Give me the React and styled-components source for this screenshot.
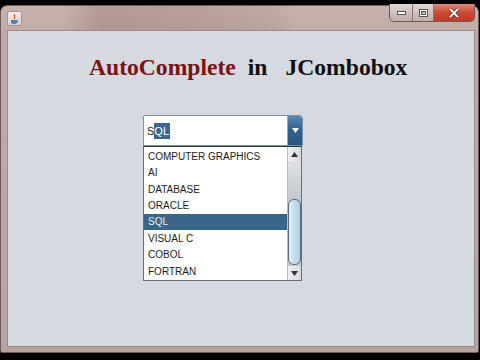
import React from 'react';
import styled, { createGlobalStyle } from 'styled-components';

const GlobalStyle = createGlobalStyle`
  html, body {
    margin: 0;
    padding: 0;
    background: #000;
  }
  #root {
    width: 480px;
    height: 360px;
    overflow: hidden;
  }
`;

const Screen = styled.div`
  width: 480px;
  height: 360px;
  background: #000;
  padding-top: 5px;
  box-sizing: border-box;
`;

const Frame = styled.div`
  width: 479px;
  height: 348px;
  box-sizing: border-box;
  border-radius: 7px 7px 2px 2px;
  border: 1px solid #6d5a58;
  background: linear-gradient(180deg, #c9b3ae 0%, #c2a9a5 8%, #b9a3a0 100%);
  padding: 0 3px 5px 6px;
  display: flex;
  flex-direction: column;
`;

const TitleBar = styled.div`
  height: 24px;
  display: flex;
  align-items: flex-start;
  background: linear-gradient(90deg, transparent 12%, rgba(140, 110, 105, 0.35) 20%, rgba(150, 120, 118, 0.3) 40%, rgba(150, 125, 120, 0.2) 55%, transparent 62%);
`;

const AppIcon = styled.div`
  width: 13px;
  height: 13px;
  margin: 5px 0 0 0;
  border: 1px solid #a49896;
  border-radius: 2px;
  background: linear-gradient(180deg, #f4eeee, #d7cfce);
  display: flex;
  align-items: center;
  justify-content: center;
`;

const Controls = styled.div`
  margin-left: auto;
  margin-top: -2px;
  display: flex;
  border: 1px solid #6c5a5a;
  border-top: none;
  border-radius: 0 0 5px 5px;
  overflow: hidden;
  height: 17px;
`;

const CtrlButton = styled.div`
  width: ${(p) => p.w}px;
  height: 100%;
  display: flex;
  align-items: center;
  justify-content: center;
  background: ${(p) =>
    p.close
      ? 'linear-gradient(180deg, #e08a78 0%, #cc4a32 50%, #c0392a 100%)'
      : 'linear-gradient(180deg, #e2d8d6 0%, #cfc1be 50%, #bfaeab 100%)'};
  border-left: ${(p) => (p.first ? 'none' : '1px solid #8a7473')};
`;

const Content = styled.div`
  flex: 1;
  background: #d6d9df;
  border: 1px solid #9c8c8a;
  display: flex;
  flex-direction: column;
`;

const Heading = styled.h1`
  margin: 22px 0 0 81px;
  font-family: 'Liberation Serif', 'Times New Roman', serif;
  font-weight: bold;
  font-size: 23.6px;
  line-height: 28px;
  color: #111;
  display: flex;
  white-space: pre;
`;

const Word = styled.span`
  color: ${(p) => p.color || '#111'};
  margin-left: ${(p) => p.gap || 0}px;
`;

const Combo = styled.div`
  margin: 34px 0 0 135px;
  width: 160px;
  display: flex;
  flex-direction: column;
`;

const Field = styled.div`
  height: 31px;
  box-sizing: border-box;
  border: 1px solid #7890a8;
  border-radius: 2px 4px 0 0;
  background: #fff;
  display: flex;
  align-items: stretch;
`;

const FieldText = styled.div`
  flex: 1;
  display: flex;
  align-items: center;
  padding-left: 3px;
  font-family: 'Liberation Sans', Arial, sans-serif;
  font-size: 11px;
  color: #222;
`;

const Selected = styled.span`
  background: #3b6891;
  color: #fff;
  padding: 2px 1px 2px 0;
`;

const ArrowButton = styled.div`
  width: 14px;
  background: linear-gradient(180deg, #5b88b4 0%, #33628e 45%, #2a5680 100%);
  display: flex;
  align-items: center;
  justify-content: center;
  border-left: 1px solid #9ab;
  border-radius: 0 3px 0 0;
`;

const Popup = styled.div`
  width: 159px;
  height: 135px;
  box-sizing: border-box;
  border: 1px solid #6f6f72;
  border-top: 1px solid #333;
  background: #fff;
  display: flex;
`;

const List = styled.div`
  flex: 1;
  display: flex;
  flex-direction: column;
  padding-top: 1px;
`;

const Item = styled.div`
  flex-shrink: 0;
  height: 16.45px;
  display: flex;
  align-items: center;
  padding-left: 4px;
  font-family: 'Liberation Sans', Arial, sans-serif;
  font-size: 10px;
  color: ${(p) => (p.active ? '#e8eef5' : '#1c1c1c')};
  background: ${(p) => (p.active ? '#3a6689' : 'transparent')};
`;

const ScrollBar = styled.div`
  width: 13px;
  display: flex;
  flex-direction: column;
  border-left: 1px solid #b8bcc2;
  background: linear-gradient(90deg, #d9dbde 0%, #c4c7cb 60%, #b9bcc1 100%);
`;

const ScrollArrow = styled.div`
  height: 14px;
  display: flex;
  align-items: center;
  justify-content: center;
  background: linear-gradient(90deg, #eef0f2, #d6d9dd);
`;

const Track = styled.div`
  flex: 1;
  display: flex;
  flex-direction: column;
  justify-content: flex-end;
  background: linear-gradient(180deg, #dfe1e4 0%, #c9ccd0 30%, #b6b9be 55%, #c5c8cc 100%);
`;

const Thumb = styled.div`
  height: 66px;
  margin-bottom: 1px;
  box-sizing: border-box;
  border: 1px solid #556a82;
  border-radius: 6px;
  background: linear-gradient(90deg, #e6f0fa 0%, #c6dcef 50%, #b4cfe6 100%);
`;

const items = [
  'COMPUTER GRAPHICS',
  'AI',
  'DATABASE',
  'ORACLE',
  'SQL',
  'VISUAL C',
  'COBOL',
  'FORTRAN',
];

const Triangle = ({ up, color = '#fff' }) => (
  <svg width="7" height="5" viewBox="0 0 7 5">
    <path d={up ? 'M3.5 0 L7 5 L0 5 Z' : 'M0 0 L7 0 L3.5 5 Z'} fill={color} />
  </svg>
);

const App = () => (
  <>
    <GlobalStyle />
    <Screen>
      <Frame>
        <TitleBar>
          <AppIcon>
            <svg width="9" height="10" viewBox="0 0 9 10">
              <path d="M5 0 C3 2 6 3 4 5" stroke="#d05a20" fill="none" strokeWidth="1.2" />
              <path d="M1 6 H7 V8 Q7 10 4 10 Q1 10 1 8 Z" fill="#5b7da8" />
              <path d="M7 6.5 Q9 7 7 8.5" stroke="#5b7da8" fill="none" />
            </svg>
          </AppIcon>
          <Controls>
            <CtrlButton w={22} first>
              <svg width="9" height="4" viewBox="0 0 9 4">
                <rect x="0.5" y="0.5" width="8" height="3" fill="#fff" stroke="#555" />
              </svg>
            </CtrlButton>
            <CtrlButton w={20}>
              <svg width="9" height="8" viewBox="0 0 9 8">
                <rect x="0.5" y="0.5" width="8" height="7" fill="#fff" stroke="#555" />
                <rect x="2.5" y="2.5" width="4" height="3" fill="#c9bcba" stroke="#555" />
              </svg>
            </CtrlButton>
            <CtrlButton w={40} close>
              <svg width="12" height="10" viewBox="0 0 12 10">
                <path d="M2 1 L10 9 M10 1 L2 9" stroke="#5a1a12" strokeWidth="3.2" />
                <path d="M2 1 L10 9 M10 1 L2 9" stroke="#fff" strokeWidth="2" />
              </svg>
            </CtrlButton>
          </Controls>
        </TitleBar>
        <Content>
          <Heading>
            <Word color="#7b1216">AutoComplete</Word>
            <Word gap={12}>in</Word>
            <Word gap={18}>JCombobox</Word>
          </Heading>
          <Combo>
            <Field>
              <FieldText>
                S<Selected>QL</Selected>
              </FieldText>
              <ArrowButton>
                <Triangle />
              </ArrowButton>
            </Field>
            <Popup>
              <List>
                {items.map((it) => (
                  <Item key={it} active={it === 'SQL'}>
                    {it}
                  </Item>
                ))}
              </List>
              <ScrollBar>
                <ScrollArrow>
                  <Triangle up color="#333" />
                </ScrollArrow>
                <Track>
                  <Thumb />
                </Track>
                <ScrollArrow>
                  <Triangle color="#333" />
                </ScrollArrow>
              </ScrollBar>
            </Popup>
          </Combo>
        </Content>
      </Frame>
    </Screen>
  </>
);

export default App;
